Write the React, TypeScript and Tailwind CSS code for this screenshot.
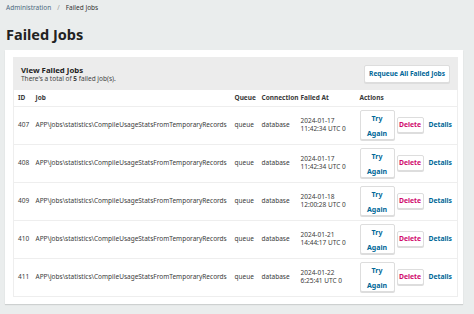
import React from 'react'

type Job = { id: number; date: string; time: string }

const jobs: Job[] = [
  { id: 407, date: '2024-01-17', time: '11:42:34 UTC 0' },
  { id: 408, date: '2024-01-17', time: '11:42:34 UTC 0' },
  { id: 409, date: '2024-01-18', time: '12:00:28 UTC 0' },
  { id: 410, date: '2024-01-21', time: '14:44:17 UTC 0' },
  { id: 411, date: '2024-01-22', time: '6:25:41 UTC 0' },
]

const jobName = 'APP\\jobs\\statistics\\CompileUsageStatsFromTemporaryRecords'

export default function App() {
  return (
    <div
      className="w-[474px] h-[314px] overflow-hidden bg-[#eaeded] text-[#222]"
      style={{ fontFamily: '"Noto Sans", "Open Sans", sans-serif' }}
    >
      {/* Breadcrumb */}
      <nav className="flex items-center gap-[5px] px-[6px] pt-[3px] h-[14px] text-[6.5px] leading-none">
        <span className="text-[#4d6a80]">Administration</span>
        <span className="text-[#999] px-[1px]">/</span>
        <span className="text-[#333]">Failed Jobs</span>
      </nav>

      <h1 className="px-[6px] mt-[13px] h-[23px] text-[14.5px] font-bold leading-none">Failed Jobs</h1>

      {/* Card */}
      <div className="mx-[5px] w-[458px] bg-white pl-[8px] pr-[5px] py-[7px] shadow-[0_1px_1px_rgba(0,0,0,0.12)]">
        <div className="flex items-center justify-between bg-[#ececec] h-[33px] pl-[8px] pr-[8px]">
          <div className="pt-[1px]">
            <div className="text-[7.8px] font-bold leading-[10px] text-[#222]">View Failed Jobs</div>
            <div className="text-[6.5px] leading-[8px] text-[#444]">
              There's a total of <b>5</b> failed job(s).
            </div>
          </div>
          <button className="h-[18px] px-[4px] bg-white border border-[#ddd] rounded-[2px] text-[6.6px] font-bold text-[#006798] shadow-[0_1px_0_#ddd]">
            Requeue All Failed Jobs
          </button>
        </div>

        <table className="w-full table-fixed border-collapse border-x border-b border-[#eee] text-[6.5px] leading-[8px] text-[#3a3a3a]">
          <colgroup>
            <col className="w-[18px]" />
            <col className="w-[199px]" />
            <col className="w-[27px]" />
            <col className="w-[39px]" />
            <col className="w-[59px]" />
            <col />
          </colgroup>
          <thead>
            <tr className="h-[16px] text-left font-bold">
              <th className="pl-[4px] font-bold">ID</th>
              <th className="pl-[4px] font-bold">Job</th>
              <th className="pl-[4px] font-bold">Queue</th>
              <th className="pl-[4px] font-bold">Connection</th>
              <th className="pl-[4px] font-bold">Failed At</th>
              <th className="pl-[4px] font-bold">Actions</th>
            </tr>
          </thead>
          <tbody>
            {jobs.map(job => (
              <tr key={job.id} className="h-[38px] border-t border-[#eee]">
                <td className="pl-[4px]">{job.id}</td>
                <td className="pl-[4px] whitespace-nowrap overflow-hidden">{jobName}</td>
                <td className="pl-[4px]">queue</td>
                <td className="pl-[4px]">database</td>
                <td className="pl-[4px]">
                  <div>{job.date}</div>
                  <div>{job.time}</div>
                </td>
                <td className="pl-[4px]">
                  <div className="flex items-center">
                    <button className="w-[35px] h-[30px] bg-white border border-[#ddd] rounded-[2px] shadow-[0_1px_0_#ddd] text-[7px] font-bold leading-[15px] text-[#006798]">
                      Try<br />Again
                    </button>
                    <button className="ml-[2px] w-[27px] h-[16px] bg-white border border-[#ddd] rounded-[2px] shadow-[0_1px_0_#ddd] text-[6.8px] font-bold text-[#d00a6c]">
                      Delete
                    </button>
                    <span className="ml-[5px] text-[6.8px] font-bold text-[#006798]">Details</span>
                  </div>
                </td>
              </tr>
            ))}
          </tbody>
        </table>
      </div>
    </div>
  )
}
